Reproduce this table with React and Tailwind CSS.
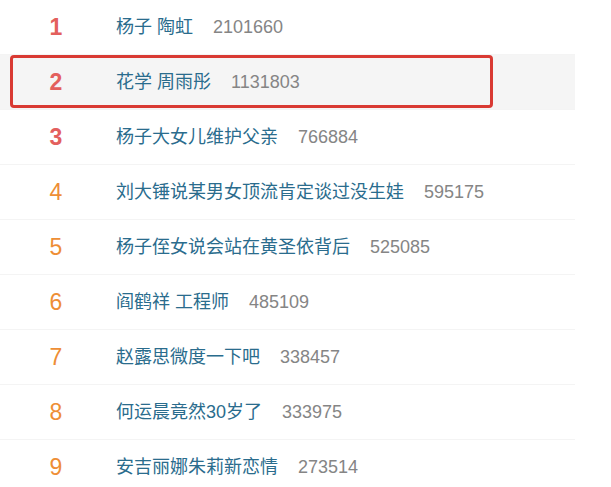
import React from 'react'

// hot search list, row 2 is highlighted and circled
const items = [
  { title: '杨子 陶虹', count: '2101660' },
  { title: '花学 周雨彤', count: '1131803' },
  { title: '杨子大女儿维护父亲', count: '766884' },
  { title: '刘大锤说某男女顶流肯定谈过没生娃', count: '595175' },
  { title: '杨子侄女说会站在黄圣依背后', count: '525085' },
  { title: '阎鹤祥 工程师', count: '485109' },
  { title: '赵露思微度一下吧', count: '338457' },
  { title: '何运晨竟然30岁了', count: '333975' },
  { title: '安吉丽娜朱莉新恋情', count: '273514' },
]

const Row = ({ item, rank }) => {
  const top = rank <= 3
  const active = rank === 2
  return (
    <div
      className={
        'relative flex items-center h-[55px] border-b border-[#f4f4f4] ' +
        (active ? 'bg-[#f5f5f5]' : 'bg-white')
      }
    >
      <div
        className={
          'w-[112px] text-center text-[23px] leading-none ' +
          (top ? 'font-bold text-[#e3605d]' : 'text-[#ee8e35]')
        }
      >
        {rank}
      </div>
      <span className="ml-[4px] text-[18px] text-[#2a6c8d]">{item.title}</span>
      <span className="ml-[20px] text-[18px] text-[#858585]">{item.count}</span>
      {active && (
        <div className="absolute left-[10px] top-0 w-[483px] h-[53px] border-[3px] border-[#d93a33] rounded-[4px]" />
      )}
    </div>
  )
}

export default function App() {
  return (
    <div
      className="w-[611px] h-[487px] bg-white overflow-hidden"
      style={{ fontFamily: '"Liberation Sans", "Noto Sans CJK SC", sans-serif' }}
    >
      <div className="w-[575px]">
        {items.map((item, i) => (
          <Row key={i} item={item} rank={i + 1} />
        ))}
      </div>
    </div>
  )
}
